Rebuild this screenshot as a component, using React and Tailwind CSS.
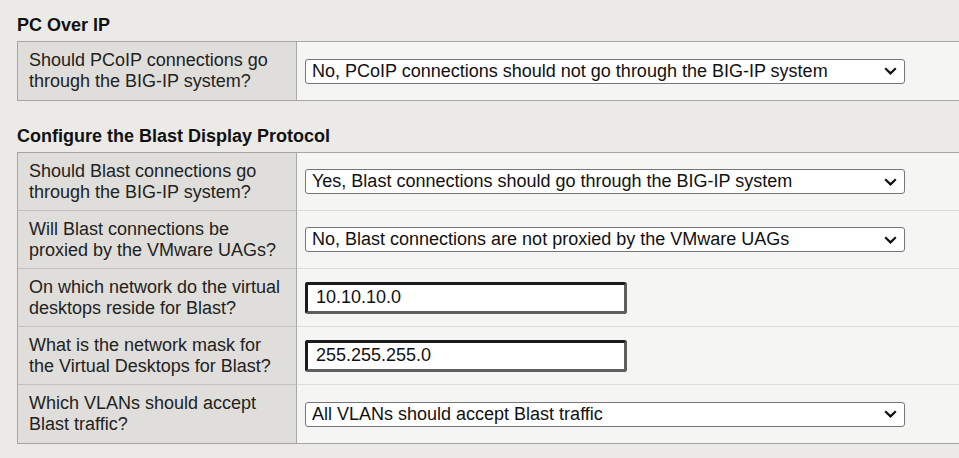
const font = { fontFamily: '"Liberation Sans", Arial, sans-serif' };

const Chevron = () => (
  <svg
    className="pointer-events-none absolute right-[8px] top-1/2 -translate-y-1/2"
    width="13"
    height="8"
    viewBox="0 0 13 8"
    fill="none"
  >
    <path d="M1.2 1.2 L6.5 6.4 L11.8 1.2" stroke="#111" strokeWidth="2.2" />
  </svg>
);

const Select = ({ value }) => (
  <div className="relative w-[600px]">
    <select
      defaultValue={value}
      className="block h-[25px] w-full appearance-none rounded-[3px] border border-[#767676] bg-white pl-[6px] pr-[30px] text-[18px] leading-[21px] text-[#111] outline-none"
    >
      <option>{value}</option>
    </select>
    <Chevron />
  </div>
);

const TextInput = ({ value }) => (
  <input
    type="text"
    defaultValue={value}
    className="block h-[32px] w-[322px] rounded-[3px] border-[3px] border-t-[#1b1b1b] border-l-[#1b1b1b] border-r-[#5f5f5f] border-b-[#5f5f5f] bg-white pl-[8px] text-[18px] text-[#111] outline-none"
  />
);

const Row = ({ label, children, last }) => (
  <div className="flex h-[58px]">
    <div
      className={
        "flex w-[279px] shrink-0 items-center border-r border-[#aaa9a6] bg-[#dfdedb] pl-[11px] text-[18px] leading-[21px] text-[#222] " +
        (last ? "" : "border-b border-b-[#c2c1be]")
      }
    >
      <div>{label}</div>
    </div>
    <div
      className={
        "flex flex-1 items-center bg-[#f5f5f3] pl-[8px] " +
        (last ? "" : "border-b border-b-[#dcdcda]")
      }
    >
      {children}
    </div>
  </div>
);

const Section = ({ title, rows, top }) => (
  <section className={top}>
    <h2 className="mb-[6px] text-[18px] font-bold leading-[20px] text-[#111]">{title}</h2>
    <div className="w-[1000px] border border-[#a6a5a2]">
      {rows.map((r, i) => (
        <Row key={i} label={r.label} last={i === rows.length - 1}>
          {r.kind === "select" ? <Select value={r.value} /> : <TextInput value={r.value} />}
        </Row>
      ))}
    </div>
  </section>
);

const pcoip = [
  {
    label: (
      <>
        Should PCoIP connections go
        <br />
        through the BIG-IP system?
      </>
    ),
    kind: "select",
    value: "No, PCoIP connections should not go through the BIG-IP system",
  },
];

const blast = [
  {
    label: (
      <>
        Should Blast connections go
        <br />
        through the BIG-IP system?
      </>
    ),
    kind: "select",
    value: "Yes, Blast connections should go through the BIG-IP system",
  },
  {
    label: (
      <>
        Will Blast connections be
        <br />
        proxied by the VMware UAGs?
      </>
    ),
    kind: "select",
    value: "No, Blast connections are not proxied by the VMware UAGs",
  },
  {
    label: (
      <>
        On which network do the virtual
        <br />
        desktops reside for Blast?
      </>
    ),
    kind: "input",
    value: "10.10.10.0",
  },
  {
    label: (
      <>
        What is the network mask for
        <br />
        the Virtual Desktops for Blast?
      </>
    ),
    kind: "input",
    value: "255.255.255.0",
  },
  {
    label: (
      <>
        Which VLANs should accept
        <br />
        Blast traffic?
      </>
    ),
    kind: "select",
    value: "All VLANs should accept Blast traffic",
  },
];

export default function App() {
  return (
    <div
      className="h-[458px] w-[959px] overflow-hidden bg-[#ebeae7] pl-[17px] pt-[15px]"
      style={font}
    >
      <Section title="PC Over IP" rows={pcoip} />
      <Section title="Configure the Blast Display Protocol" rows={blast} top="mt-[25px]" />
    </div>
  );
}
